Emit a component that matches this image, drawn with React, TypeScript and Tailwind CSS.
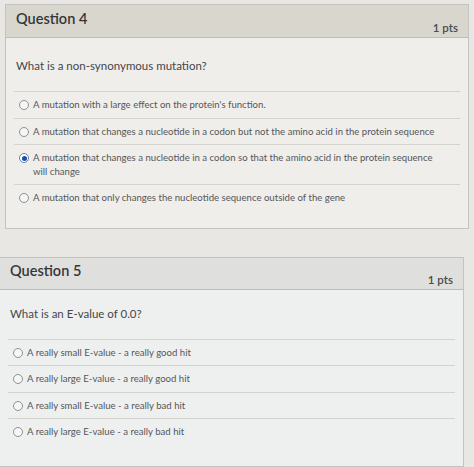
import React from "react";

type Option = { text: string; selected?: boolean };

type QuestionProps = {
  number: number;
  points: string;
  prompt: string;
  options: Option[];
  className?: string;
  headerClass?: string;
  bodyClass?: string;
};

function Radio({ selected }: { selected?: boolean }) {
  return (
    <span
      className={`mt-[2px] flex h-[10px] w-[10px] shrink-0 items-center justify-center rounded-full border ${
        selected ? "border-[#5b84c4] bg-white" : "border-[#8d9196] bg-[#f6f6f4]"
      }`}
    >
      {selected && <span className="h-[5px] w-[5px] rounded-full bg-[#1f4e9a]" />}
    </span>
  );
}

function QuestionCard({ number, points, prompt, options, className = "", headerClass = "", bodyClass = "" }: QuestionProps) {
  return (
    <div className={`border border-[#c4c3bf] ${className}`}>
      {/* header */}
      <div className={`flex items-start justify-between border-b border-[#bdbbb5] pl-[10px] pr-[10px] ${headerClass}`}>
        <span className="text-[14.5px] font-semibold text-[#35363a]">Question {number}</span>
        <span className="pt-[11px] text-[11.5px] font-semibold text-[#4a4b4f]">{points}</span>
      </div>

      {/* body */}
      <div className={`px-[8px] ${bodyClass}`}>
        <p className="px-[2px] text-[11.5px] leading-[14px] text-[#45464a]">{prompt}</p>
        <div className="mt-[18px]">
          {options.map((o) => (
            <div
              key={o.text}
              className="flex gap-[4px] border-t border-[#d3d2cd] py-[6px] pl-[5px] pr-[20px]"
            >
              <Radio selected={o.selected} />
              <span className="text-[9.6px] leading-[13.5px] text-[#55565a]">{o.text}</span>
            </div>
          ))}
        </div>
      </div>
    </div>
  );
}

export default function App() {
  return (
    <div
      className="flex h-[467px] w-[474px] flex-col overflow-hidden bg-[#e8e7e3]"
      style={{ fontFamily: "Lato, 'Open Sans', sans-serif" }}
    >
      <div className="pl-[5px] pr-[5px] pt-[4px]">
        <QuestionCard
          number={4}
          points="1 pts"
          prompt="What is a non-synonymous mutation?"
          className="bg-[#efeeea]"
          headerClass="h-[33px] bg-[#d9d6cd] pt-[3px]"
          bodyClass="pt-[21px] pb-[17px]"
          options={[
            { text: "A mutation with a large effect on the protein's function." },
            {
              text: "A mutation that changes a nucleotide in a codon but not the amino acid in the protein sequence",
            },
            {
              text: "A mutation that changes a nucleotide in a codon so that the amino acid in the protein sequence will change",
              selected: true,
            },
            { text: "A mutation that only changes the nucleotide sequence outside of the gene" },
          ]}
        />
      </div>

      <div className="mt-[28px] pr-[10px]">
        <QuestionCard
          number={5}
          points="1 pts"
          prompt="What is an E-value of 0.0?"
          className="border-l-0 bg-[#eef0ef]"
          headerClass="h-[32px] bg-[#dfe0dd] pt-[2px]"
          bodyClass="pt-[17px] pb-[21px]"
          options={[
            { text: "A really small E-value - a really good hit" },
            { text: "A really large E-value - a really good hit" },
            { text: "A really small E-value - a really bad hit" },
            { text: "A really large E-value - a really bad hit" },
          ]}
        />
      </div>

      <div className="mt-auto h-[4px] bg-[#3b4a5c]" />
    </div>
  );
}
